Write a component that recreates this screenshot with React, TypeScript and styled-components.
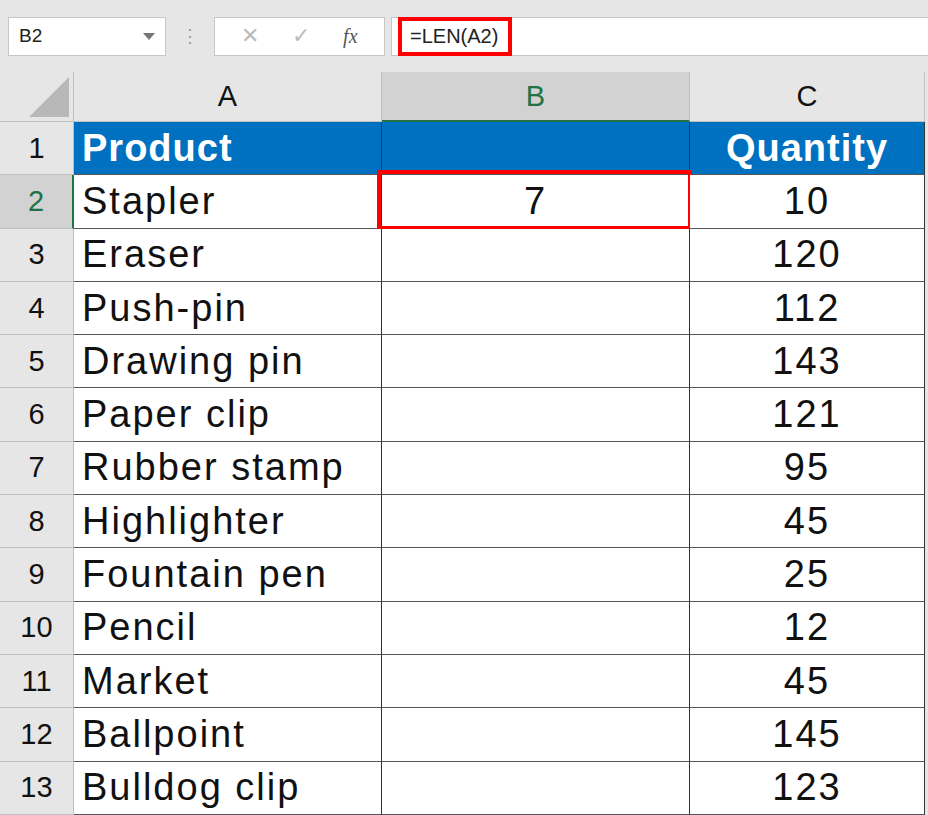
import React from "react";
import styled, { createGlobalStyle } from "styled-components";

const G = createGlobalStyle`
  html,body{margin:0;padding:0;background:#fff;font-family:"Liberation Sans",Arial,sans-serif;}
  body{width:928px;height:815px;overflow:hidden;}
`;

const Bar = styled.div`
  height:72px;background:#e6e6e6;display:flex;align-items:center;gap:0;padding:0 0 0 8px;box-sizing:border-box;
`;
const NameBox = styled.div`
  width:158px;height:39px;background:#fff;border:1px solid #c6c6c6;box-sizing:border-box;display:flex;align-items:center;justify-content:space-between;padding:0 10px;font-size:19px;color:#222;
`;
const Dots = styled.div`
  width:48px;display:flex;justify-content:center;color:#999;font-size:18px;
`;
const FxBox = styled.div`
  width:171px;height:39px;background:#fff;border:1px solid #c6c6c6;box-sizing:border-box;display:flex;align-items:center;justify-content:space-around;padding:0 10px;color:#bbb;font-size:22px;
`;
const Formula = styled.div`
  flex:1;height:39px;margin-left:6px;background:#fff;border:1px solid #c6c6c6;border-right:none;box-sizing:border-box;display:flex;align-items:center;padding-left:6px;
`;
const Red = styled.div`
  border:4px solid #f00;height:39px;box-sizing:border-box;display:flex;align-items:center;padding:0 10px 0 8px;font-size:20px;color:#222;
`;
const Grid = styled.div`
  display:grid;grid-template-columns:74px 308px 308px 235px 3px;grid-template-rows:50px repeat(13,53.3px);background:#e6e6e6;
`;
const Head = styled.div<{ sel?: boolean }>`
  background:${p => (p.sel ? "#d2d2d2" : "#e6e6e6")};border-right:1px solid #c0c0c0;
  border-bottom:${p => (p.sel ? "2px solid #217346" : "1px solid #c0c0c0")};box-sizing:border-box;
  display:flex;align-items:center;justify-content:center;font-size:29px;color:${p => (p.sel ? "#217346" : "#111")};
`;
const RowHead = styled.div<{ sel?: boolean }>`
  background:${p => (p.sel ? "#d2d2d2" : "#e6e6e6")};border-bottom:1px solid #c0c0c0;
  border-right:${p => (p.sel ? "2px solid #217346" : "1px solid #c0c0c0")};box-sizing:border-box;
  display:flex;align-items:center;justify-content:center;font-size:29px;color:${p => (p.sel ? "#217346" : "#111")};
`;
const Cell = styled.div<{ head?: boolean; center?: boolean }>`
  background:${p => (p.head ? "#0070c0" : "#fff")};color:${p => (p.head ? "#fff" : "#111")};
  font-weight:${p => (p.head ? 700 : 400)};font-size:38px;letter-spacing:${p => (p.head ? "1px" : "2px")};
  border-right:1.5px solid #333;border-bottom:1.5px solid #555;
  box-sizing:border-box;display:flex;align-items:center;padding:0 8px;justify-content:${p => (p.center ? "center" : "flex-start")};
  position:relative;white-space:nowrap;
`;
const SelBox = styled.div`
  position:absolute;left:-5px;top:-5px;right:-3px;bottom:-2px;border:4px solid #f00;pointer-events:none;
`;
const Corner = styled.div`
  background:#e6e6e6;border-right:1px solid #c0c0c0;border-bottom:1px solid #c0c0c0;position:relative;
`;
const Tri = styled.div`
  position:absolute;right:4px;bottom:4px;width:0;height:0;border-left:40px solid transparent;border-bottom:40px solid #b8b8b8;
`;
const Filler = styled.div`background:#e6e6e6;`;

const rows: [string, string][] = [
  ["Stapler", "10"], ["Eraser", "120"], ["Push-pin", "112"], ["Drawing pin", "143"], ["Paper clip", "121"],
  ["Rubber stamp", "95"], ["Highlighter", "45"], ["Fountain pen", "25"], ["Pencil", "12"], ["Market", "45"],
  ["Ballpoint", "145"], ["Bulldog clip", "123"],
];

export default function App() {
  return (
    <>
      <G />
      <Bar>
        <NameBox>B2<svg width="12" height="7"><path d="M0 0h12L6 7z" fill="#777" /></svg></NameBox>
        <Dots>⋮</Dots>
        <FxBox>
          <span>✕</span><span>✓</span><span style={{ fontStyle: "italic", fontFamily: "Liberation Serif", color: "#555", fontSize: 20 }}>fx</span>
        </FxBox>
        <Formula><Red>=LEN(A2)</Red></Formula>
      </Bar>
      <Grid>
        <Corner><Tri /></Corner>
        <Head>A</Head>
        <Head sel>B</Head>
        <Head>C</Head>
        <Filler />
        <RowHead>1</RowHead>
        <Cell head>Product</Cell>
        <Cell head />
        <Cell head center>Quantity</Cell>
        <Filler />
        {rows.map((r, i) => (
          <React.Fragment key={i}>
            <RowHead sel={i === 0}>{i + 2}</RowHead>
            <Cell>{r[0]}</Cell>
            <Cell center>{i === 0 ? "7" : ""}{i === 0 && <SelBox />}</Cell>
            <Cell center>{r[1]}</Cell>
            <Filler />
          </React.Fragment>
        ))}
      </Grid>
    </>
  );
}
